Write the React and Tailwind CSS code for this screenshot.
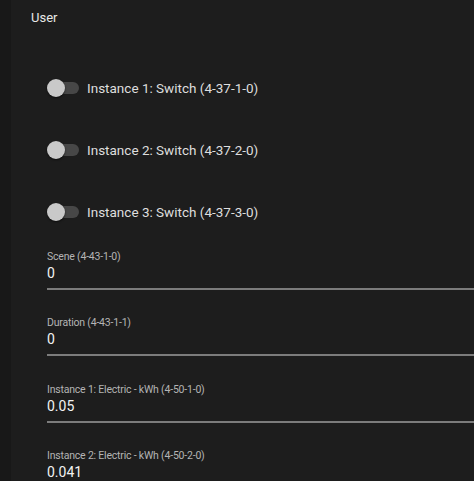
export default function App() {
  const switches = [
    'Instance 1: Switch (4-37-1-0)',
    'Instance 2: Switch (4-37-2-0)',
    'Instance 3: Switch (4-37-3-0)',
  ]
  const fields = [
    { label: 'Scene (4-43-1-0)', value: '0' },
    { label: 'Duration (4-43-1-1)', value: '0' },
    { label: 'Instance 1: Electric - kWh (4-50-1-0)', value: '0.05' },
    { label: 'Instance 2: Electric - kWh (4-50-2-0)', value: '0.041' },
  ]

  return (
    <div className="flex h-[481px] w-[474px] overflow-hidden bg-[#1d1d1d] font-['Roboto',sans-serif]">
      <div className="w-[11px] shrink-0 bg-[#181818]" />
      <div className="flex-1">
        {/* Header */}
        <div className="pl-[20px] pt-[10px] text-[13px] leading-[16px] text-[#e8e8e8]">User</div>

        {/* Switches */}
        <div className="mt-[31px] pl-[36px]">
          {switches.map((s) => (
            <div key={s} className="flex h-[62px] items-center">
              <span className="relative flex h-[18px] w-[32px] items-center">
                <span className="absolute left-[2px] right-0 h-[12px] rounded-full bg-[#474747]" />
                <span className="absolute left-0 h-[18px] w-[18px] rounded-full bg-[#c9c9c9] shadow-[0_1px_2px_rgba(0,0,0,0.6)]" />
              </span>
              <span className="ml-[8px] text-[13.5px] text-[#dedede]">{s}</span>
            </div>
          ))}
        </div>

        {/* Fields */}
        <div className="mt-[7px] flex flex-col gap-[26.4px] pl-[36px]">
          {fields.map((f) => (
            <div key={f.label}>
              <div className="text-[10.5px] leading-[13px] tracking-[-0.2px] text-[#b4b4b4]">{f.label}</div>
              <div className="h-[20px] text-[14px] leading-[20px] text-[#f2f2f2]">{f.value}</div>
              <div className="mt-[5px] h-[2px] bg-[#7c7c7c]" />
            </div>
          ))}
        </div>
      </div>
    </div>
  )
}
